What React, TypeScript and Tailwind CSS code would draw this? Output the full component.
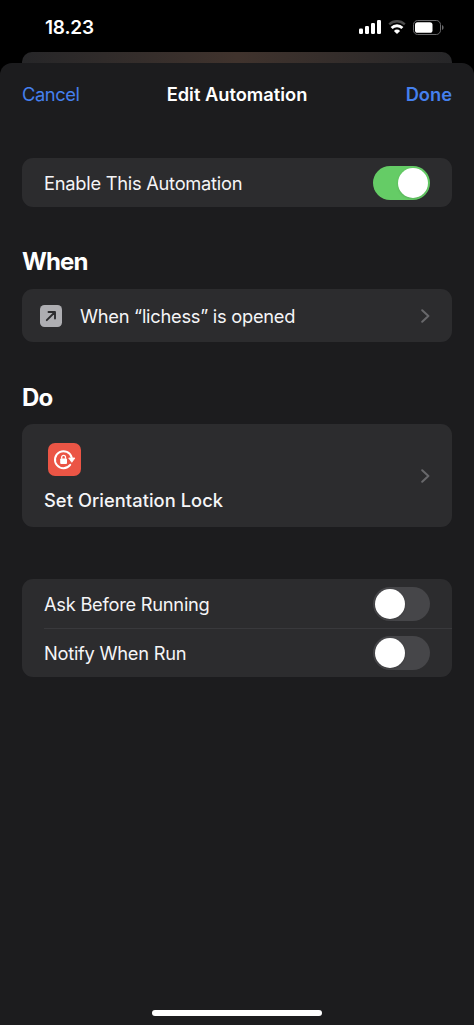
import type { ReactNode } from "react";
import { clsx } from "clsx";

interface SwitchProps {
  checked?: boolean;
  label: string;
}

function Switch({ checked = false, label }: SwitchProps) {
  return (
    <button
      type="button"
      role="switch"
      aria-checked={checked}
      aria-label={label}
      className={clsx(
        "flex h-[34px] w-[57px] shrink-0 items-center rounded-full px-[2px]",
        checked ? "justify-end bg-[#65cc66]" : "justify-start bg-[#464649]"
      )}
    >
      <span className="size-[30px] rounded-full bg-white shadow-sm" />
    </button>
  );
}

function Card({ className, children }: { className?: string; children: ReactNode }) {
  return (
    <section className={clsx("rounded-[11px] bg-[#2c2c2e]", className)}>{children}</section>
  );
}

function Chevron() {
  return (
    <svg viewBox="0 0 9 14" className="h-[14px] w-[9px] shrink-0" fill="none">
      <path
        d="M1.2 1.2 7.4 7 1.2 12.8"
        stroke="#68686b"
        strokeWidth="2"
        strokeLinecap="round"
        strokeLinejoin="round"
      />
    </svg>
  );
}

function StatusIcons() {
  return (
    <div className="flex items-center">
      {/* Signal */}
      <svg viewBox="0 0 22 14" className="h-[14px] w-[22px]" fill="#fff">
        <rect x="0" y="8.5" width="4" height="5.5" rx="1.2" />
        <rect x="6" y="6" width="4" height="8" rx="1.2" />
        <rect x="12" y="3" width="4" height="11" rx="1.2" />
        <rect x="18" y="0" width="4" height="14" rx="1.2" />
      </svg>
      {/* Wi-Fi, outer band dimmed */}
      <svg viewBox="0 0 18 14" className="ml-[7px] h-[14px] w-[18px]" fill="none">
        <path d="M1.2 4.4a11.4 11.4 0 0 1 15.6 0" stroke="#4a4a4a" strokeWidth="2.4" />
        <path d="M3.6 8a7.6 7.6 0 0 1 10.800 0" stroke="#fff" strokeWidth="2.8" />
        <path d="M9 14 5.900 10.900a4.400 4.400 0 0 1 6.200 0Z" fill="#fff" />
      </svg>
      {/* Battery */}
      <svg viewBox="0 0 31 15" className="ml-[7px] h-[15px] w-[31px]" fill="none">
        <rect x=".5" y=".5" width="27" height="14" rx="4.2" stroke="#69696b" />
        <rect x="2" y="2.2" width="17.5" height="10.6" rx="2.6" fill="#fff" />
        <path d="M29 5v5c1-.4 1.6-1.3 1.6-2.5S30 5.4 29 5Z" fill="#69696b" />
      </svg>
    </div>
  );
}

function OpenAppIcon() {
  return (
    <svg viewBox="0 0 22 22" className="size-[22px] shrink-0" fill="none">
      <rect width="22" height="22" rx="4.5" fill="#aeaeb2" />
      <path
        d="M6.8 15.2 15 7M8.5 7H15v6.5"
        stroke="#2c2c2e"
        strokeWidth="1.9"
        strokeLinecap="round"
        strokeLinejoin="round"
      />
    </svg>
  );
}

function OrientationLockIcon() {
  return (
    <svg viewBox="0 0 33 33" className="size-[33px]" fill="none">
      <rect width="33" height="33" rx="7" fill="#eb5545" />
      <path
        d="M22.2 21.900A8.500 8.500 0 1 1 23.700 14.500"
        stroke="#fff"
        strokeWidth="2"
        strokeLinecap="round"
      />
      <path
        d="M20.700 15h6.200l-3.100 4.300Z"
        fill="#fff"
        stroke="#fff"
        strokeWidth=".8"
        strokeLinejoin="round"
      />
      <rect x="12.2" y="15.400" width="6.800" height="5.600" rx=".9" fill="#fff" />
      <path d="M13.700 15.700v-1.500a1.900 1.900 0 0 1 3.800 0v1.500" stroke="#fff" strokeWidth="1.300" />
    </svg>
  );
}

export default function App() {
  return (
    <div className="flex h-[1025px] w-[474px] flex-col overflow-hidden bg-black font-['Inter','Liberation_Sans',sans-serif] text-[18.3px] leading-none tracking-[-0.26px] text-[#f5f5f7]">
      <header className="flex h-[52px] shrink-0 items-center justify-between pl-[45px] pr-[30px] pt-[2px]">
        <span className="text-[19px] font-semibold tracking-[-0.2px] text-white">18.23</span>
        <StatusIcons />
      </header>

      {/* Edge of the sheet behind */}
      <div className="mx-[22px] h-[11px] shrink-0 rounded-t-[10px] bg-linear-to-r from-[#262628] via-[#40332d] to-[#262628]" />

      <main className="flex flex-1 flex-col rounded-t-[12px] bg-[#1c1c1e] px-[22px]">
        <nav className="grid h-[62px] shrink-0 grid-cols-3 items-center whitespace-nowrap">
          <button type="button" className="text-left tracking-[-0.4px] text-[#4580ee]">Cancel</button>
          <h1 className="text-center font-semibold tracking-normal text-white">Edit Automation</h1>
          <button type="button" className="text-right font-semibold tracking-normal text-[#4580ee]">Done</button>
        </nav>

        <Card className="mt-[33px] flex h-[49px] items-center justify-between px-[22px]">
          <span className="pt-[1px]">Enable This Automation</span>
          <Switch checked label="Enable This Automation" />
        </Card>

        <h2 className="mt-[42px] h-[24px] pt-[1px] text-[24px] font-bold tracking-[-0.9px] text-white">When</h2>
        <Card className="mt-[16px] flex h-[53px] items-center pl-[18px] pr-[22px]">
          <OpenAppIcon />
          <span className="ml-[18px] flex-1 pt-[1px]">When “lichess” is opened</span>
          <Chevron />
        </Card>

        <h2 className="mt-[43px] h-[24px] pt-[1px] text-[24px] font-bold tracking-[-0.9px] text-white">Do</h2>
        <Card className="mt-[15px] flex h-[103px] items-center justify-between pr-[22px]">
          <div className="flex h-full flex-col items-start pt-[19px]">
            <div className="ml-[26px]">
              <OrientationLockIcon />
            </div>
            <span className="ml-[22px] mt-[15px] font-medium tracking-[0.06px]">Set Orientation Lock</span>
          </div>
          <Chevron />
        </Card>

        <Card className="mt-[52px] pl-[22px]">
          <div className="flex h-[50px] items-center justify-between border-b border-[#39393c] pr-[22px]">
            <span className="pt-[1px]">Ask Before Running</span>
            <Switch label="Ask Before Running" />
          </div>
          <div className="flex h-[48px] items-center justify-between pr-[22px]">
            <span className="pt-[1px]">Notify When Run</span>
            <Switch label="Notify When Run" />
          </div>
        </Card>

        <div className="mb-[9px] mt-auto h-[6px] w-[170px] self-center rounded-full bg-white" />
      </main>
    </div>
  );
}
